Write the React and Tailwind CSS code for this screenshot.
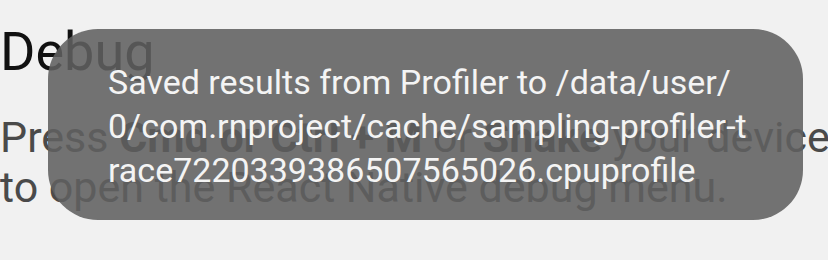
export default function App() {
  return (
    <div className="relative w-[828px] h-[260px] overflow-hidden bg-[#f1f1f1]" style={{ fontFamily: 'Roboto, "Noto Sans", sans-serif' }}>
      <div className="pt-[20px]">
        <div className="text-[54px] leading-[63px] text-[#111] whitespace-nowrap">Debug</div>
        <div className="mt-[29px] text-[43px] leading-[50px] text-[#4a4a4a] whitespace-nowrap">
          Press <span className="font-bold text-[#333]">Cmd or Ctrl + M</span> or <span className="font-bold text-[#333]">Shake</span> your device
          <br />
          to open the React Native debug menu.
        </div>
      </div>
      <div className="absolute left-[48px] top-[29px] w-[755px] h-[191px] rounded-[50px] bg-[rgba(96,96,96,0.88)] pl-[60px] pt-[31px]">
        <div className="text-[34px] leading-[44px] text-[#f4f4f4] whitespace-nowrap">
          Saved results from Profiler to /data/user/
          <br />
          0/com.rnproject/cache/sampling-profiler-t
          <br />
          race7220339386507565026.cpuprofile
        </div>
      </div>
    </div>
  );
}
